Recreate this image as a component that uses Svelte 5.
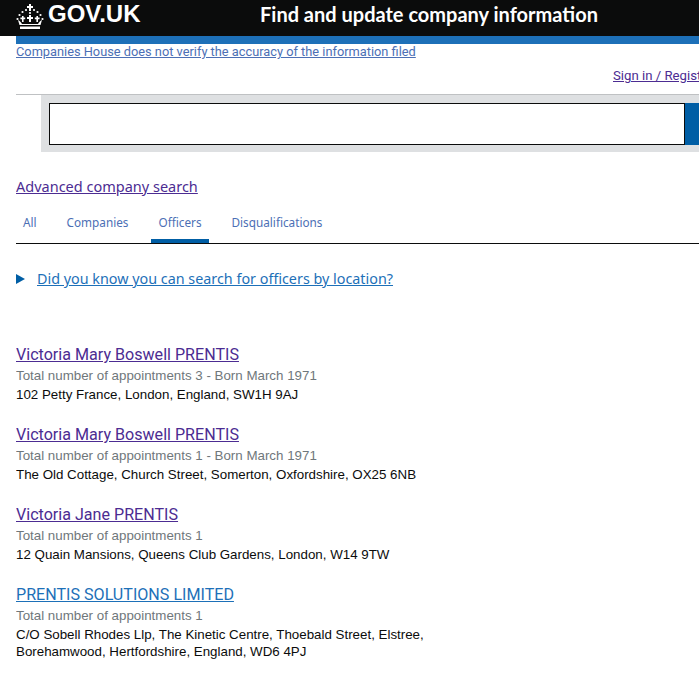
<script>
    const results = [
        { name: "Victoria Mary Boswell PRENTIS", meta: "Total number of appointments 3 - Born March 1971", address: ["102 Petty France, London, England, SW1H 9AJ"], visited: true },
        { name: "Victoria Mary Boswell PRENTIS", meta: "Total number of appointments 1 - Born March 1971", address: ["The Old Cottage, Church Street, Somerton, Oxfordshire, OX25 6NB"], visited: true },
        { name: "Victoria Jane PRENTIS", meta: "Total number of appointments 1", address: ["12 Quain Mansions, Queens Club Gardens, London, W14 9TW"], visited: true },
        { name: "PRENTIS SOLUTIONS LIMITED", meta: "Total number of appointments 1", address: ["C/O Sobell Rhodes Llp, The Kinetic Centre, Thoebald Street, Elstree,", "Borehamwood, Hertfordshire, England, WD6 4PJ"], visited: false }
    ];

    const tabs = ["All", "Companies", "Officers", "Disqualifications"];
</script>

<header class="top">
    <a class="logo" href="#gov">
        <svg width="28" height="26" viewBox="0 0 28 26" aria-hidden="true">
            <g fill="#fff">
                <path d="M13 1h2v2h2v2h-2v3h-2V5h-2V3h2z"/>
                <circle cx="10" cy="7" r="1.1"/><circle cx="18" cy="7" r="1.1"/>
                <circle cx="6.5" cy="9" r="1.1"/><circle cx="21.5" cy="9" r="1.1"/>
                <circle cx="3.5" cy="12" r="1.1"/><circle cx="24.5" cy="12" r="1.1"/>
                <circle cx="1.5" cy="16" r="1.1"/><circle cx="26.5" cy="16" r="1.1"/>
                <circle cx="14" cy="10" r="1.1"/>
                <path d="M13 12h2v2h2v2h-2v3h-2v-3h-2v-2h2z"/>
                <path d="M6 13h1.6v1.6h1.6v1.6H7.6V19H6v-2.8H4.4v-1.6H6z"/>
                <path d="M20.4 13H22v1.6h1.6v1.6H22V19h-1.6v-2.8h-1.6v-1.6h1.6z"/>
                <path d="M2 17c2 1 3 2 4 4h16c1-2 2-3 4-4l-1.5 5H3.5z"/>
                <path d="M4 23.5h20V26H4z"/>
            </g>
        </svg>
        <span>GOV.UK</span>
    </a>
    <span class="service">Find and update company information</span>
</header>

<div class="page">
    <div class="rule"></div>
    <a class="notice" href="#notice">Companies House does not verify the accuracy of the information filed</a>

    <nav class="account"><a href="#signin">Sign in / Register</a></nav>

    <div class="search-wrap">
        <form class="search" on:submit|preventDefault>
            <input type="text" aria-label="Search" />
            <button type="submit">Search</button>
        </form>
    </div>

    <a class="advanced" href="#advanced">Advanced company search</a>

    <ul class="tabs">
        {#each tabs as tab}
            <li class:active={tab === "Officers"}><a href="#tab">{tab}</a></li>
        {/each}
    </ul>

    <p class="hint"><span class="arrow"></span><a href="#hint">Did you know you can search for officers by location?</a></p>

    <ul class="results">
        {#each results as r}
            <li>
                <a class="name" class:visited={r.visited} href="#officer">{r.name}</a>
                <p class="meta">{r.meta}</p>
                {#each r.address as line}
                    <p class="address">{line}</p>
                {/each}
            </li>
        {/each}
    </ul>
</div>

<style>
    :global(body) {
        margin: 0;
        background: #fff;
        overflow: hidden;
    }

    .top {
        display: flex;
        align-items: center;
        box-sizing: border-box;
        height: 36px;
        padding-bottom: 8px;
        background: #0b0c0c;
        color: #fff;
        font-family: "Liberation Sans", Arial, sans-serif;
        font-weight: 700;
        width: 699px;
    }

    .logo {
        display: flex;
        align-items: center;
        gap: 4px;
        margin-left: 16px;
        color: #fff;
        text-decoration: none;
        font-size: 24px;
        width: 244px;
        flex: none;
    }

    .logo svg {
        margin: 0 0 -3px;
    }

    .service {
        font-family: Lato, sans-serif;
        font-size: 20px;
        white-space: nowrap;
    }

    .page {
        margin-left: 16px;
        width: 683px;
        overflow: hidden;
    }

    .rule {
        height: 8px;
        background: #1d70b8;
    }

    .notice {
        display: block;
        font-family: Roboto, sans-serif;
        font-size: 12.8px;
        line-height: 16px;
        width: fit-content;
        color: #4c6fb5;
    }

    .account {
        padding: 7px 0 9px 597px;
        white-space: nowrap;
        font-family: Roboto, sans-serif;
        font-size: 13.2px;
        line-height: 18px;
    }

    .account a {
        color: #4c2c92;
    }

    .search-wrap {
        border-top: 1px solid #bfc1c3;
        margin-right: -40px;
    }

    .search {
        display: flex;
        margin-left: 25px;
        padding: 8px 0 7px 8px;
        background: #dee0e2;
        height: 42px;
    }

    .search input {
        box-sizing: border-box;
        width: 636px;
        height: 42px;
        border: 1px solid #0b0c0c;
        background: #fff;
        margin: 0;
        flex: none;
    }

    .search button {
        width: 90px;
        height: 42px;
        border: 0;
        background: #005ea5;
        color: #fff;
        font-size: 16px;
        flex: none;
    }

    .advanced {
        display: block;
        margin-top: 24px;
        font-family: "Noto Sans", sans-serif;
        font-size: 14.5px;
        line-height: 20px;
        width: fit-content;
        color: #4c2c92;
    }

    .tabs {
        display: flex;
        list-style: none;
        margin: 12px 0 0;
        padding: 0;
        border-bottom: 1px solid #0b0c0c;
        font-family: "Noto Sans", sans-serif;
        font-size: 11.75px;
    }

    .tabs li {
        padding: 0 7px;
        margin-right: 16px;
        height: 35px;
        line-height: 28px;
        box-sizing: border-box;
    }

    .tabs a {
        color: #4c6fb5;
        text-decoration: none;
    }

    .tabs li.active {
        border-bottom: 4px solid #005ea5;
    }

    .hint {
        display: flex;
        align-items: center;
        margin: 25px 0 0;
        font-family: "Noto Sans", sans-serif;
        font-size: 14.35px;
        line-height: 20px;
    }

    .hint a {
        color: #1d70b8;
    }

    .arrow {
        width: 0;
        height: 0;
        border-left: 9px solid #005ea5;
        border-top: 5px solid transparent;
        border-bottom: 5px solid transparent;
        margin-right: 12px;
    }

    .results {
        list-style: none;
        margin: 55px 0 0;
        padding: 0;
    }

    .results li {
        margin-bottom: 21px;
    }

    .name {
        display: block;
        font-family: Roboto, sans-serif;
        font-size: 16.1px;
        line-height: 22px;
        width: fit-content;
        color: #1d70b8;
    }

    .name.visited {
        color: #4c2c92;
    }

    .meta {
        margin: 1px 0 0;
        font-family: "Liberation Sans", Arial, sans-serif;
        font-size: 13.33px;
        line-height: 18px;
        color: #6f777b;
    }

    .address {
        margin: 0;
        font-family: "Liberation Sans", Arial, sans-serif;
        font-size: 13.33px;
        line-height: 17px;
        color: #0b0c0c;
    }

    .meta + .address {
        margin-top: 1px;
    }
</style>
